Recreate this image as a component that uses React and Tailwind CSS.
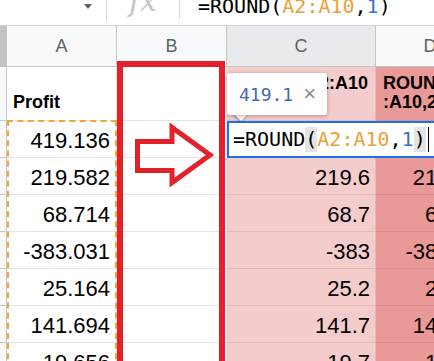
import React from 'react';

const MONO = "font-['DejaVu_Sans_Mono',monospace]";

const rows = [
  ['219.582', '219.6', '219.58'],
  ['68.714', '68.7', '68.71'],
  ['-383.031', '-383', '-383.03'],
  ['25.164', '25.2', '25.16'],
  ['141.694', '141.7', '141.69'],
  ['19.656', '19.7', '19.66'],
];

function Formula({ parens }) {
  // =ROUND(A2:A10,1) with sheet colouring
  const p = parens ? 'inline-block leading-[25px] bg-[#e4e4e4]' : '';
  return (
    <>
      <span>=ROUND</span>
      <span className={p}>(</span>
      <span className="text-[#e8a23a]">A2:A10</span>
      <span>,</span>
      <span className="text-[#3b6fc5]">1</span>
      <span className={p}>)</span>
    </>
  );
}

function DataRow({ a, c, d }) {
  return (
    <div className="flex h-[37px] shrink-0">
      <div className="w-[7px] shrink-0 bg-[#f8f9fa] border-r border-b border-[#c4c7c5]" />
      <div className="w-[110px] shrink-0 border-r border-b border-[#e2e3e3] flex items-end justify-end pr-[6px] pb-[4px]">{a}</div>
      <div className="w-[110px] shrink-0 border-r border-b border-[#e2e3e3]" />
      <div className="w-[149px] shrink-0 bg-[#f4cccc] border-r border-b border-[#e6b7b7] flex items-end justify-end pr-[5px] pb-[4px]">{c}</div>
      <div className="w-[108px] shrink-0 bg-[#ea9999] border-b border-[#db8b8b] flex items-end justify-end pr-[4px] pb-[4px]">{d}</div>
    </div>
  );
}

export default function App() {
  return (
    <div className="relative w-[434px] h-[361px] overflow-hidden bg-white font-['Liberation_Sans',Arial,sans-serif] text-black">
      {/* formula bar */}
      <div className="flex items-start h-[26px] border-b border-[#d3d3d3] overflow-hidden">
        <div className="w-[107px] h-[20px] shrink-0 border-r border-[#dadce0] flex justify-end pr-[14px] pt-[4px]">
          <div className="w-0 h-0 border-l-[4px] border-r-[4px] border-t-[5px] border-l-transparent border-r-transparent border-t-[#5f6368]" />
        </div>
        <div className="w-[73px] h-[19px] shrink-0 border-r border-[#dadce0] flex justify-center overflow-hidden">
          <span className="font-['DejaVu_Serif',serif] italic text-[30px] leading-[30px] mt-[-14px] text-[#c6c6c6]">fx</span>
        </div>
        <div className={`${MONO} text-[20px] leading-[20px] mt-[-4px] pl-[18px] whitespace-nowrap`}>
          <Formula />
        </div>
      </div>

      {/* column headers */}
      <div className="flex h-[41px] text-[18px] text-[#5f6368]">
        <div className="w-[7px] shrink-0 bg-[#c3c3c3] border-b border-[#c4c7c5]" />
        <div className="w-[110px] shrink-0 bg-[#f8f9fa] border-r border-b border-[#c4c7c5] flex items-center justify-center">A</div>
        <div className="w-[110px] shrink-0 bg-[#f8f9fa] border-r border-b border-[#c4c7c5] flex items-center justify-center">B</div>
        <div className="w-[149px] shrink-0 bg-[#e8eaed] border-r border-b border-[#c4c7c5] flex items-center justify-center">C</div>
        <div className="w-[108px] shrink-0 bg-[#f8f9fa] border-b border-[#c4c7c5] flex items-center justify-center">D</div>
      </div>

      {/* header row 1 */}
      <div className="flex h-[54px] text-[18px] leading-[19px] font-bold">
        <div className="w-[7px] shrink-0 bg-[#f8f9fa] border-r border-b border-[#c4c7c5]" />
        <div className="w-[110px] shrink-0 border-r border-b border-[#e2e3e3] flex items-end pl-[6px] pb-[8px]">Profit</div>
        <div className="w-[110px] shrink-0 border-r border-b border-[#e2e3e3]" />
        <div className="w-[149px] shrink-0 bg-[#f4cccc] border-r border-b border-[#e6b7b7] flex flex-col justify-end pl-[7px] pb-[8px] whitespace-nowrap overflow-hidden">
          <div>ROUND(A2:A10</div>
          <div>,1)</div>
        </div>
        <div className="w-[108px] shrink-0 bg-[#ea9999] border-b border-[#db8b8b] flex flex-col justify-end pl-[7px] pb-[8px] whitespace-nowrap overflow-hidden">
          <div>ROUND(A2</div>
          <div>:A10,2)</div>
        </div>
      </div>

      {/* data rows */}
      <div className="text-[22px] leading-[25px]">
        <DataRow a="419.136" c="419.1" d="419.14" />
        {rows.map((r) => (
          <DataRow key={r[0]} a={r[0]} c={r[1]} d={r[2]} />
        ))}
      </div>

      {/* range A2:A10 highlight */}
      <div className="absolute left-[7px] top-[120px] w-[110px] h-[300px] border-2 border-dashed border-[#eea53c]" />

      {/* red annotation box */}
      <div className="absolute left-[117px] top-[61px] w-[108px] h-[320px] border-[6px] border-[#e3212b]" />

      {/* red arrow */}
      <svg className="absolute left-[130px] top-[120px]" width="90" height="70" viewBox="0 0 90 70">
        <polygon
          points="7.5,21.5 42,21.5 42,7.5 80,35 42,62.5 42,50.5 7.5,50.5"
          fill="none"
          stroke="#e3212b"
          strokeWidth="5"
          strokeLinejoin="miter"
        />
      </svg>

      {/* in-cell editor */}
      <div className={`absolute left-[227px] top-[121px] w-[230px] h-[37px] bg-white border-2 border-[#1a73e8] flex items-center pl-[4px] ${MONO} text-[20px] leading-[25px] whitespace-nowrap`}>
        <Formula parens />
        <span className="inline-block w-px h-[25px] bg-black ml-[2px]" />
      </div>

      {/* value preview tooltip */}
      <div className="absolute left-[236px] top-[109px] w-[10px] h-[10px] rotate-45 bg-white shadow-[0_1px_3px_rgba(0,0,0,0.35)]" />
      <div className="absolute left-[227px] top-[73px] w-[100px] h-[42px] bg-white rounded-[3px] shadow-[0_1px_4px_rgba(0,0,0,0.3)] flex items-center pl-[12px]">
        <span className={`${MONO} text-[18px] text-[#4169b3]`}>419.1</span>
        <span className="ml-[10px] text-[22px] leading-none text-[#8a8a8a]">×</span>
      </div>
    </div>
  );
}
